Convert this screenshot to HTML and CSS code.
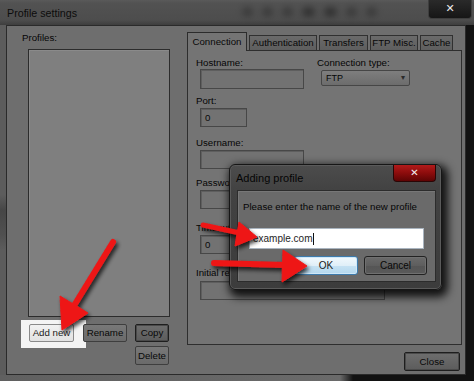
FILE: index.html
```html
<!DOCTYPE html>
<html>
<head>
<meta charset="utf-8">
<title>Profile settings</title>
<link rel="stylesheet" href="styles.css">
</head>
<body>
<div class="screen">
  <div class="titlebar">
    <span class="title">Profile settings</span>
    <div class="blur-icons"><i></i><i></i><i></i><i></i><i></i><i></i><i></i></div>
    <div class="tb-close">✕</div>
  </div>
  <div class="mid">
    <div class="edge-left"></div>
    <div class="frame">
      <div class="profiles">
        <div class="lbl">Profiles:</div>
        <div class="listbox"></div>
        <div class="prof-btns">
          <div class="btn btn-add">Add new</div>
          <div class="btn btn-rename">Rename</div>
          <div class="btn-col">
            <div class="btn btn-default btn-copy">Copy</div>
            <div class="btn btn-delete">Delete</div>
          </div>
        </div>
      </div>
      <div class="settings">
        <div class="notebook">
          <div class="tabs">
            <div class="tab active t-conn">Connection</div>
            <div class="tab t-auth">Authentication</div>
            <div class="tab t-trans">Transfers</div>
            <div class="tab t-ftp">FTP Misc.</div>
            <div class="tab t-cache">Cache</div>
          </div>
          <div class="panel">
            <div class="row1">
              <div class="field f-host">
                <div class="lbl">Hostname:</div>
                <div class="input w-wide"></div>
              </div>
              <div class="field f-type">
                <div class="lbl">Connection type:</div>
                <div class="select"><span>FTP</span><span class="caret">▾</span></div>
              </div>
            </div>
            <div class="field f-port">
              <div class="lbl">Port:</div>
              <div class="input w-small">0</div>
            </div>
            <div class="field f-user">
              <div class="lbl">Username:</div>
              <div class="input w-wide"></div>
            </div>
            <div class="field f-pass">
              <div class="lbl">Password:</div>
              <div class="input w-wide"></div>
            </div>
            <div class="field f-time">
              <div class="lbl">Timeout:</div>
              <div class="input w-small">0</div>
            </div>
            <div class="field f-init">
              <div class="lbl">Initial remote directory:</div>
              <div class="input w-long"></div>
            </div>
          </div>
        </div>
        <div class="close-row"><div class="btn btn-default btn-close">Close</div></div>
      </div>
    </div>
  </div>
  <div class="bottom-strip"></div>

  <div class="dialog">
    <div class="dlg-title">
      <span class="dlg-name">Adding profile</span>
      <div class="dlg-close">✕</div>
    </div>
    <div class="dlg-client">
      <div class="dlg-text">Please enter the name of the new profile</div>
      <div class="dlg-input">example.com<span class="cursor"></span></div>
      <div class="dlg-btns">
        <div class="dbtn dbtn-ok">OK</div>
        <div class="dbtn dbtn-cancel">Cancel</div>
      </div>
    </div>
  </div>

  <svg class="arrows" width="474" height="381" viewBox="0 0 474 381">
    <defs>
      <filter id="sh" x="-20%" y="-20%" width="140%" height="140%">
        <feDropShadow dx="2" dy="3" stdDeviation="2" flood-color="#000" flood-opacity="0.75"/>
      </filter>
    </defs>
    <g fill="#ee1717" stroke="#ee1717" filter="url(#sh)">
      <line x1="113" y1="242" x2="75" y2="304" stroke-width="6" stroke-linecap="round"/>
      <polygon points="60,296 88,313 62,330" stroke-width="1" stroke-linejoin="round"/>
      <line x1="203" y1="225" x2="240" y2="233" stroke-width="5" stroke-linecap="round"/>
      <polygon points="239,222 257,237 235,246" stroke-width="1" stroke-linejoin="round"/>
      <line x1="214" y1="263" x2="286" y2="265" stroke-width="6" stroke-linecap="round"/>
      <polygon points="283,250 307,266 282,282" stroke-width="1" stroke-linejoin="round"/>
    </g>
  </svg>
</div>
</body>
</html>
```

FILE: styles.css
```css
* { box-sizing: border-box; }
html, body { margin: 0; padding: 0; }
body {
  width: 474px;
  height: 381px;
  overflow: hidden;
  background: #121212;
  font-family: "Liberation Sans", Arial, sans-serif;
  font-size: 9.7px;
  color: #050505;
}
.screen {
  position: relative;
  width: 474px;
  height: 381px;
  overflow: hidden;
  background: #121212;
}

/* ---------- title bar ---------- */
.titlebar {
  height: 25px;
  display: flex;
  align-items: flex-start;
  background: linear-gradient(to bottom, #5a5a5a 0, #525252 3px, #4d4d4d 20px, #3e3e3e 25px);
  position: relative;
}
.title {
  font-size: 10.7px;
  line-height: 14px;
  padding: 6px 0 0 7px;
  color: #0c0c0c;
  position: relative;
  z-index: 1;
}
.blur-icons {
  display: flex;
  gap: 9px;
  margin: 7px 0 0 165px;
  filter: blur(3px);
  opacity: 0.7;
}
.blur-icons i {
  display: block;
  width: 11px;
  height: 10px;
  border-radius: 50%;
  background: #343434;
}
.blur-icons i:nth-child(4), .blur-icons i:nth-child(5) { background: #262626; width: 13px; }
.tb-close {
  margin-left: auto;
  margin-right: 2px;
  width: 44px;
  height: 19px;
  background: linear-gradient(to bottom, #2a2a2a, #161616);
  border: 1px solid #3e3e3e;
  border-top: none;
  border-radius: 0 0 4px 4px;
  color: #e8e8e8;
  font-family: "DejaVu Sans", sans-serif;
  font-size: 11px;
  font-weight: bold;
  line-height: 18px;
  text-align: center;
}

/* ---------- main frame ---------- */
.mid {
  display: flex;
  height: 350px;
}
.edge-left {
  width: 6px;
  background: linear-gradient(to bottom, #5c5c5c 0, #5c5c5c 170px, #464646 185px, #505050 210px, #5c5c5c 225px);
}
.frame {
  width: 460px;
  height: 350px;
  border: 1px solid #2a2a2a;
  background: #6e6e6e;
  display: flex;
}
.bottom-strip {
  height: 6px;
  background: linear-gradient(to right, #606060 0, #6a6a6a 340px, #121212 353px);
}

/* ---------- profiles column ---------- */
.profiles {
  width: 180px;
  padding-top: 6px;
}
.lbl {
  line-height: 12px;
  white-space: nowrap;
}
.profiles > .lbl { padding-left: 15px; }
.listbox {
  margin: 5px 0 0 21px;
  width: 142px;
  height: 268px;
  border: 1px solid #2c2c2c;
  background: #7f7f7f;
  box-shadow: inset 1px 1px 0 #8a8a8a;
}
.prof-btns {
  display: flex;
  align-items: flex-start;
  margin-top: 7px;
  padding-left: 22px;
  position: relative;
  z-index: 0;
}
.btn {
  height: 18px;
  border: 1px solid #3e3e3e;
  border-radius: 2px;
  background: linear-gradient(to bottom, #787878, #6a6a6a);
  text-align: center;
  line-height: 16px;
  white-space: nowrap;
  color: #080808;
}
.btn-default {
  border-color: #1e1e1e;
  background: linear-gradient(to bottom, #6e6e6e, #5c5c5c);
  box-shadow: inset 0 0 0 1px #4a4a4a;
}
.btn-add {
  position: relative;
  width: 45px;
  background: linear-gradient(to bottom, #f2f2f2, #e2e2e2);
  border-color: #8a8a8a;
  color: #1a1a1a;
}
.btn-add::before {
  content: "";
  position: absolute;
  left: -9px;
  top: -5px;
  width: 65px;
  height: 28px;
  background: #f4f4f4;
  z-index: -1;
}
.btn-rename { width: 44px; margin-left: 9px; }
.btn-col {
  display: flex;
  flex-direction: column;
  gap: 4px;
  margin-left: 8px;
}
.btn-copy { width: 34px; }
.btn-delete { width: 34px; height: 19px; line-height: 17px; }

/* ---------- settings column ---------- */
.settings {
  flex: 1;
  padding-top: 6px;
  display: flex;
  flex-direction: column;
}
.notebook { width: 275px; }
.tabs {
  display: flex;
  align-items: flex-end;
  gap: 2px;
  height: 18px;
  position: relative;
  z-index: 1;
}
.tab {
  height: 15px;
  border: 1px solid #303030;
  border-bottom: none;
  background: linear-gradient(to bottom, #6a6a6a, #5e5e5e);
  text-align: center;
  line-height: 14px;
  white-space: nowrap;
  color: #080808;
}
.tab.active {
  height: 19px;
  margin-bottom: -1px;
  background: #747474;
  line-height: 17px;
  border-color: #2c2c2c;
}
.t-conn { width: 60px; }
.t-auth { width: 68px; }
.t-trans { width: 49px; }
.t-ftp { width: 48px; }
.t-cache { width: 33px; }
.panel {
  height: 295px;
  border: 1px solid #2e2e2e;
  background: #747474;
  padding: 6px 0 0 8px;
}
.row1 { display: flex; }
.field { display: flex; flex-direction: column; align-items: flex-start; }
.field .input, .field .select { margin-top: 1px; margin-left: 4px; }
.f-host { width: 121px; }
.input {
  height: 19px;
  border: 1px solid #474747;
  background: #727272;
  box-shadow: inset 1px 1px 0 #5e5e5e;
  padding-left: 4px;
  line-height: 17px;
  color: #0a0a0a;
}
.f-host .input { height: 20px; margin-top: 0; }
.w-wide { width: 104px; }
.w-small { width: 47px; }
.w-long { width: 185px; }
.select {
  width: 89px;
  height: 16px;
  border: 1px solid #464646;
  border-radius: 2px;
  background: linear-gradient(to bottom, #7e7e7e, #6c6c6c);
  display: flex;
  align-items: center;
  justify-content: space-between;
  padding: 0 4px 0 4px;
  line-height: 14px;
  font-size: 9px;
}
.caret { font-size: 8px; color: #2a2a2a; font-family: "DejaVu Sans", sans-serif; }
.f-port { margin-top: 6px; }
.f-user { margin-top: 10px; }
.f-pass { margin-top: 8px; }
.f-time { margin-top: 13px; }
.f-init { margin-top: 13px; }
.f-init .input { margin-top: 2px; }

.close-row {
  display: flex;
  justify-content: flex-end;
  margin-top: 7px;
  padding-right: 5px;
}
.btn-close { width: 56px; height: 19px; line-height: 17px; }

/* ---------- dialog ---------- */
.dialog {
  position: absolute;
  left: 229px;
  top: 164px;
  width: 213px;
  height: 126px;
  border: 1px solid #161616;
  border-radius: 6px;
  background: linear-gradient(to bottom, #4c4c4c 0, #424242 26px, #3c3c3c 100%);
  box-shadow: 3px 4px 8px 3px rgba(0,0,0,0.85), inset 0 0 0 1px #5a5a5a;
  z-index: 2;
}
.dlg-title {
  display: flex;
  align-items: flex-start;
  height: 25px;
}
.dlg-name {
  font-size: 11px;
  line-height: 14px;
  padding: 6px 0 0 6px;
  color: #050505;
}
.dlg-close {
  margin-left: auto;
  margin-right: 5px;
  width: 43px;
  height: 17px;
  border: 1px solid #2a0606;
  border-top: none;
  border-radius: 0 0 4px 4px;
  background: linear-gradient(to bottom, #b11a1a 0, #8c0c0c 50%, #5e0404 100%);
  color: #f2f2f2;
  text-align: center;
  font-family: "DejaVu Sans", sans-serif;
  font-weight: bold;
  font-size: 10px;
  line-height: 16px;
}
.dlg-client {
  margin-left: 7px;
  width: 199px;
  height: 92px;
  border: 1px solid #2c2c2c;
  background: #6a6a6a;
  box-shadow: inset 1px 1px 0 #777;
  padding: 10px 0 0 5px;
}
.dlg-text { line-height: 12px; white-space: nowrap; color: #050505; }
.dlg-input {
  margin: 15px 0 0 6px;
  width: 175px;
  height: 21px;
  border: 1px solid #a9b4bf;
  background: #ffffff;
  font-size: 10px;
  line-height: 19px;
  padding-left: 3px;
  color: #1e1e1e;
  display: flex;
  align-items: center;
}
.cursor {
  display: inline-block;
  width: 1px;
  height: 12px;
  background: #111;
  margin-left: 1px;
}
.dlg-btns {
  display: flex;
  gap: 6px;
  margin: 7px 0 0 51px;
}
.dbtn {
  height: 19px;
  border-radius: 3px;
  text-align: center;
  line-height: 17px;
  font-size: 10px;
}
.dbtn-ok {
  width: 64px;
  border: 1px solid #3d7bad;
  background: linear-gradient(to bottom, #f2f9fd 0, #e0eff8 50%, #c6e2f3 51%, #b4d8ef 100%);
  box-shadow: inset 0 0 0 1px #cfe8f8;
  color: #1a1a1a;
}
.dbtn-cancel {
  width: 63px;
  border: 1px solid #222;
  background: linear-gradient(to bottom, #6a6a6a 0, #5e5e5e 50%, #555 51%, #5a5a5a 100%);
  box-shadow: inset 0 0 0 1px #707070;
  color: #080808;
}

/* ---------- annotation arrows ---------- */
.arrows {
  position: absolute;
  left: 0;
  top: 0;
  pointer-events: none;
  z-index: 3;
}
```
